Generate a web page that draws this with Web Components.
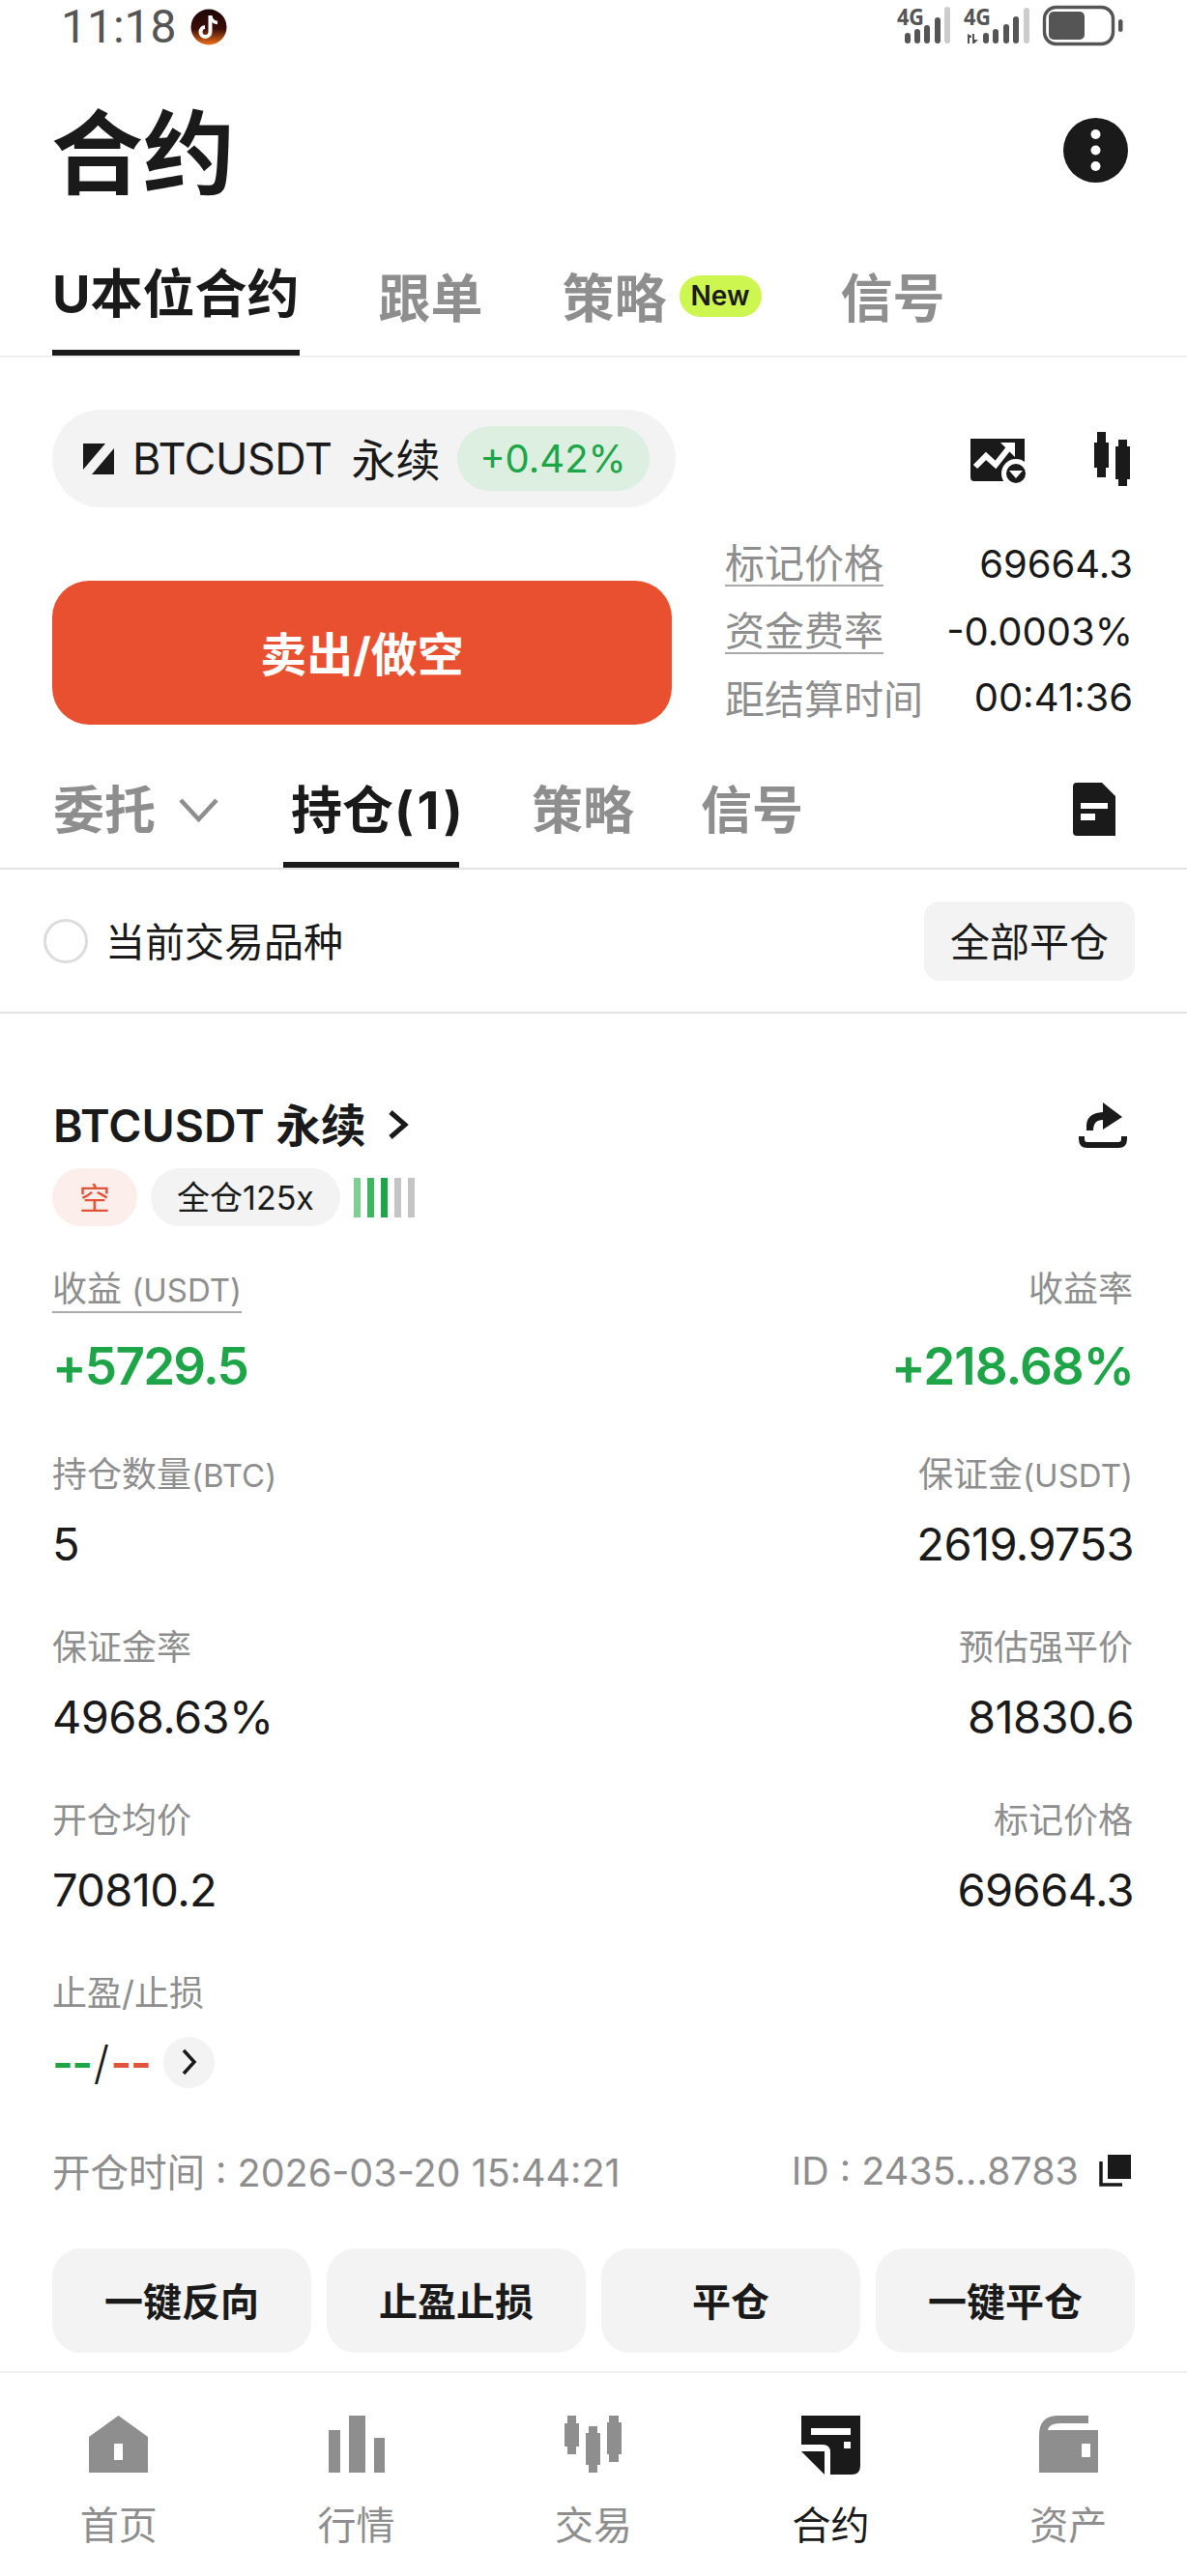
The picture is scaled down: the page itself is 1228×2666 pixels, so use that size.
<!DOCTYPE html>
<html lang="zh">
<head>
<meta charset="utf-8">
<title>合约</title>
<style>
  html, body { margin: 0; padding: 0; background: #fff; }
  body { width: 1228px; height: 2666px; overflow: hidden; color: #1a1a1a;
    font-family: Inter, "Noto Sans CJK SC", sans-serif; }
</style>
</head>
<body>
<status-bar></status-bar>
<page-header>合约</page-header>
<main-tabs></main-tabs>
<ticker-bar></ticker-bar>
<trade-panel></trade-panel>
<order-tabs></order-tabs>
<filter-row></filter-row>
<position-card></position-card>
<bottom-nav>
  <nav-item>
    <svg slot="icon" width="61" height="61" viewBox="0 0 61 61"><path fill="#8e8e8e" fill-rule="evenodd" d="M0 59V22L30.5 0 61 22V59ZM26 29V46H35V29Z"/></svg>
    首页
  </nav-item>
  <nav-item>
    <svg slot="icon" width="61" height="61" viewBox="0 0 61 61"><path fill="#8e8e8e" d="M2 15H14V59H2ZM23 0H40V59H23ZM49 23H60V59H49Z"/></svg>
    行情
  </nav-item>
  <nav-item>
    <svg slot="icon" width="61" height="61" viewBox="0 0 61 61"><path fill="#8e8e8e" d="M4 0H13V8H16V32H13V40H4V32H1V8H4ZM26 11H35V18H38V51H35V59H26V51H23V18H26ZM47 0H57V7H60V40H57V48H47V40H45V7H47Z"/></svg>
    交易
  </nav-item>
  <nav-item active>
    <svg slot="icon" width="61" height="61" viewBox="0 0 61 61"><path fill="#1a1a1a" fill-rule="evenodd" d="M0 0H61V52Q61 61 52 61H30V38Q30 30 22 30H0ZM10 13V20H51V13ZM44 27V34H51V27Z"/><path fill="#1a1a1a" d="M0 37H24V61Z"/></svg>
    合约
  </nav-item>
  <nav-item>
    <svg slot="icon" width="61" height="61" viewBox="0 0 61 61"><path fill="#8e8e8e" fill-rule="evenodd" d="M0 59V20Q0 0 20 0H51V8H22Q10 8 9 15H61V59ZM44 29V43H53V29Z"/></svg>
    资产
  </nav-item>
</bottom-nav>

<script>
class StatusBar extends HTMLElement {
  constructor() {
    super();
    this.attachShadow({ mode: "open" });
  }
  connectedCallback() {
    this.shadowRoot.innerHTML = `
      <style>
        :host { display: flex; align-items: center; height: 56px; padding: 0 63px; }
        .time { font-family: Roboto, sans-serif; font-size: 48px; line-height: 56px; color: #555; width: 134px; }
        .right { margin-left: auto; display: block; }
      </style>
      <span class="time">11:18</span>
      <svg width="38" height="38" viewBox="0 0 38 38">
        <defs><linearGradient id="tk" x1="0" y1="0" x2="0" y2="1">
          <stop offset="0" stop-color="#1d0806"/><stop offset=".55" stop-color="#3a0d08"/><stop offset="1" stop-color="#f0701a"/>
        </linearGradient></defs>
        <circle cx="19" cy="19" r="18.5" fill="url(#tk)"/>
        <path fill="none" stroke="#fff" stroke-width="4" d="M20.5 7V24A5 5 0 1 1 15 19"/>
        <path fill="none" stroke="#fff" stroke-width="3.4" d="M21 8Q22 14 28 14.5"/>
      </svg>
      <svg class="right" width="240" height="56" viewBox="925 0 240 56">
        <text x="928" y="26" font-family="'Open Sans',sans-serif" font-weight="700" font-size="24" textLength="28" lengthAdjust="spacingAndGlyphs" fill="#555">4G</text>
        <g fill="#555">
          <rect x="936" y="34" width="6" height="11" rx="3"/><rect x="946" y="30" width="6" height="15" rx="3"/>
          <rect x="956" y="26" width="6" height="19" rx="3"/><rect x="967" y="18" width="6" height="27" rx="3"/>
        </g>
        <rect x="977" y="7" width="6" height="38" rx="3" fill="#ccc"/>
        <text x="997" y="26" font-family="'Open Sans',sans-serif" font-weight="700" font-size="24" textLength="28" lengthAdjust="spacingAndGlyphs" fill="#555">4G</text>
        <path fill="#555" d="M1001 35V45H1003V39H1005V37ZM1006 35H1008V41H1012L1008 45H1006Z"/>
        <g fill="#555">
          <rect x="1017" y="34" width="6" height="11" rx="3"/><rect x="1027" y="30" width="6" height="15" rx="3"/>
          <rect x="1038" y="25" width="6" height="20" rx="3"/><rect x="1048" y="17" width="6" height="28" rx="3"/>
        </g>
        <rect x="1059" y="8" width="6" height="37" rx="3" fill="#ccc"/>
        <rect x="1080.5" y="7.5" width="71" height="38" rx="12" fill="none" stroke="#555" stroke-width="3.4"/>
        <rect x="1085" y="12" width="37" height="29" rx="5" fill="#555"/>
        <rect x="1157" y="20" width="4.5" height="13" rx="2.2" fill="#555"/>
      </svg>
    `;
  }
}

class PageHeader extends HTMLElement {
  constructor() {
    super();
    this.attachShadow({ mode: "open" });
  }
  connectedCallback() {
    this.shadowRoot.innerHTML = `
      <style>
        :host { display: flex; align-items: center; justify-content: space-between; height: 208px; padding: 0 61px 0 53px; }
        h1 { margin: 0; font-size: 95px; font-weight: 700; line-height: 120px; }
        svg { margin-bottom: 9px; }
      </style>
      <h1><slot></slot></h1>
      <svg width="67" height="67" viewBox="0 0 67 67">
        <circle cx="33.5" cy="33.5" r="33.5" fill="#1a1a1a"/>
        <circle cx="33.5" cy="17" r="5" fill="#fff"/><circle cx="33.5" cy="33.5" r="5" fill="#fff"/><circle cx="33.5" cy="50" r="5" fill="#fff"/>
      </svg>
    `;
  }
}

class MainTabs extends HTMLElement {
  constructor() {
    super();
    this.attachShadow({ mode: "open" });
  }
  connectedCallback() {
    this.shadowRoot.innerHTML = `
      <style>
        :host { display: flex; gap: 82px; height: 104px; padding: 0 54px; border-bottom: 2px solid #efefef;
          font-size: 54px; font-weight: 700; color: #8e8e8e; }
        .tab { display: flex; align-items: center; height: 82px; white-space: nowrap; }
        .on { color: #1a1a1a; height: 98px; border-bottom: 6px solid #1a1a1a; align-items: flex-start; line-height: 82px; }
        .new { display: inline-block; width: 85px; height: 43px; margin-left: 13px; margin-top: 2px; border-radius: 22px; background: #cdf651;
          color: #1a1a1a; font-size: 28px; font-weight: 600; line-height: 43px; text-align: center; }
      </style>
      <div class="tab on">U本位合约</div>
      <div class="tab">跟单</div>
      <div class="tab">策略<span class="new">New</span></div>
      <div class="tab">信号</div>
    `;
  }
}

class TickerBar extends HTMLElement {
  constructor() {
    super();
    this.attachShadow({ mode: "open" });
  }
  connectedCallback() {
    this.shadowRoot.innerHTML = `
      <style>
        :host { display: flex; align-items: center; margin-top: 54px; padding: 0 59px 0 54px; }
        .pill { display: flex; align-items: center; box-sizing: border-box; width: 645px; height: 101px; padding-left: 32px; border-radius: 51px;
          background: #f3f3f3; font-size: 45px; white-space: nowrap; }
        .sym { margin-left: 19px; letter-spacing: -0.5px; }
        .perp { margin-left: 20px; font-size: 46px; margin-top: -3px; }
        .pct { display: flex; align-items: center; justify-content: center; width: 199px; height: 67px; margin-left: 17px; box-sizing: border-box; border-radius: 34px;
          background: #dcefe1; color: #1da548; font-size: 40px; }
        .icons { margin-left: auto; display: flex; align-items: center; gap: 66px; }
        .chart { margin-top: 10px; }
      </style>
      <div class="pill">
        <svg width="32" height="32" viewBox="0 0 32 32"><path fill="#1a1a1a" d="M0 0H23L0 27ZM32 5V32H9Z"/></svg>
        <span class="sym">BTCUSDT</span><span class="perp">永续</span>
        <span class="pct">+0.42%</span>
      </div>
      <div class="icons">
        <svg class="chart" width="62" height="52" viewBox="0 0 62 52">
          <path fill="#1a1a1a" d="M0 0H56V44H4Q0 44 0 40Z"/>
          <path fill="none" stroke="#fff" stroke-width="6" d="M5 29L16 18 26 27 41 8"/>
          <path fill="#fff" d="M31 4H46V19Z"/>
          <circle cx="47" cy="36" r="15" fill="#fff"/><circle cx="47" cy="36" r="10" fill="#1a1a1a"/>
          <path fill="#fff" d="M40 33H54L47 41Z"/>
        </svg>
        <svg width="37" height="56" viewBox="0 0 37 56">
          <path fill="#1a1a1a" d="M3 0H12V11H15V37H12V47H3V37H0V11H3ZM25 8H34V15H37V49H34V56H25V49H22V15H25Z"/>
        </svg>
      </div>
    `;
  }
}

class TradePanel extends HTMLElement {
  constructor() {
    super();
    this.attachShadow({ mode: "open" });
  }
  connectedCallback() {
    this.shadowRoot.innerHTML = `
      <style>
        :host { display: grid; grid-template-columns: 641px 422px; column-gap: 55px; padding: 23px 0 0 54px; align-items: start; }
        button { margin-top: 53px; height: 149px; padding: 0 0 4px; border: 0; border-radius: 38px; background: #e95030; color: #fff;
          font: 700 48px Inter, "Noto Sans CJK SC", sans-serif; }
        .row { display: flex; align-items: center; justify-content: space-between; height: 70px; font-size: 40px; white-space: nowrap; }
        .row span:first-child { color: #8e8e8e; font-size: 41px; }
        .row.last { margin: -2px 0 2px; }
        .dot { line-height: 44px; border-bottom: 2px solid #aaa; margin-top: 2px; }
      </style>
      <button>卖出/做空</button>
      <div>
        <div class="row"><span class="dot">标记价格</span><span>69664.3</span></div>
        <div class="row"><span class="dot">资金费率</span><span>-0.0003%</span></div>
        <div class="row last"><span>距结算时间</span><span>00:41:36</span></div>
      </div>
    `;
  }
}

class OrderTabs extends HTMLElement {
  constructor() {
    super();
    this.attachShadow({ mode: "open" });
  }
  connectedCallback() {
    this.shadowRoot.innerHTML = `
      <style>
        :host { display: flex; height: 140px; border-bottom: 2px solid #e2e2e2; padding-left: 55px; position: relative;
          font-size: 53px; font-weight: 700; color: #8e8e8e; white-space: nowrap; }
        .tab { box-sizing: border-box; height: 140px; padding-top: 41px; line-height: 80px; display: flex; align-items: flex-start; }
        .on { width: 182px; padding-left: 8px; margin-left: 67px; color: #1a1a1a; border-bottom: 6px solid #1a1a1a; }
        .on b { font-weight: 700; letter-spacing: 3.5px; margin-left: 1px; }
        .chev { margin: 26px 0 0 24px; }
        .doc { position: absolute; right: 74px; top: 52px; }
      </style>
      <div class="tab">委托<svg class="chev" width="41" height="26" viewBox="0 0 41 26"><path fill="none" stroke="#8e8e8e" stroke-width="4.5" d="M2 3L20.5 23 39 3"/></svg></div>
      <div class="tab on">持仓<b>(1)</b></div>
      <div class="tab" style="margin-left:75px">策略</div>
      <div class="tab" style="margin-left:69px">信号</div>
      <svg class="doc" width="44" height="55" viewBox="0 0 44 55">
        <path fill="#1a1a1a" fill-rule="evenodd" d="M0 4Q0 0 4 0H30L44 14V55H4Q0 55 0 51ZM8 21V27H36V21ZM8 32V39H23V32Z"/>
      </svg>
    `;
  }
}

class FilterRow extends HTMLElement {
  constructor() {
    super();
    this.attachShadow({ mode: "open" });
  }
  connectedCallback() {
    this.shadowRoot.innerHTML = `
      <style>
        :host { display: flex; align-items: center; height: 147px; padding: 0 54px 0 45px; border-bottom: 2px solid #e2e2e2; font-size: 41px; }
        .check { box-sizing: border-box; width: 46px; height: 46px; border: 3px solid #dcdcdc; border-radius: 50%; margin-right: 18px; }
        .txt { padding-bottom: 3px; }
        .all { margin-left: auto; display: flex; align-items: center; justify-content: center; box-sizing: border-box; width: 218px; height: 82px; padding-bottom: 3px; border-radius: 16px; background: #f3f3f3; }
      </style>
      <span class="check"></span>
      <span class="txt">当前交易品种</span>
      <span class="all">全部平仓</span>
    `;
  }
}

class StatCell extends HTMLElement {
  constructor() {
    super();
    this.attachShadow({ mode: "open" });
  }
  connectedCallback() {
    this.shadowRoot.innerHTML = `
      <style>
        :host { display: flex; flex-direction: column; align-items: flex-start; gap: 11px; white-space: nowrap; }
        :host([right]) { align-items: flex-end; }
        :host([big]) { gap: 20px; margin-bottom: 4px; }
        .label { height: 50px; line-height: 50px; font-size: 36px; color: #8e8e8e; }
        :host([right]) .label { margin-right: 1px; }
        :host([under]) .label { box-sizing: border-box; border-bottom: 2px solid #aaa; }
        .value { display: flex; align-items: center; height: 70px; font-size: 47px; letter-spacing: -0.6px; }
        :host([big]) .value { font-size: 53px; font-weight: 600; color: #1da548; letter-spacing: -1px; }
        :host([under]) .value { letter-spacing: -1.8px; }
      </style>
      <span class="label"><slot name="label"></slot></span>
      <span class="value"><slot></slot></span>
    `;
  }
}

class PositionCard extends HTMLElement {
  constructor() {
    super();
    this.attachShadow({ mode: "open" });
  }
  connectedCallback() {
    this.shadowRoot.innerHTML = `
      <style>
        :host { display: block; padding: 82px 55px 19px 54px; }
        .head { display: flex; align-items: center; height: 60px; font-size: 46.5px; font-weight: 600; white-space: nowrap; }
        .head .name { margin-left: 1px; }
        .head .go { margin: 6px 0 0 22px; }
        .head .share { margin: 6px 7px 0 auto; }
        .tags { display: flex; align-items: center; height: 60px; margin-top: 18px; font-size: 34px; }
        .tag { display: flex; align-items: center; justify-content: center; box-sizing: border-box; height: 60px; padding-bottom: 3px; border-radius: 30px; }
        .short { width: 88px; background: #fceeeb; color: #e0553a; font-size: 32px; }
        .lev { width: 196px; margin-left: 14px; background: #f3f3f3; }
        .bars { display: flex; gap: 7px; margin-left: 14px; }
        .bars i { width: 7px; height: 41px; background: #c4c4c4; }
        .stats { display: grid; grid-template-columns: 1fr 1fr; row-gap: 48px; margin-top: 40px; }
        .tp { display: inline-flex; align-items: center; }
        .green, .red { font-weight: 600; letter-spacing: -1.5px; }
        .green { color: #1da548; } .red { color: #e0553a; }
        .tp .sl { font-weight: 300; font-size: 47px; margin: 0 2px; }
        .tp .more { display: flex; align-items: center; justify-content: center; width: 53px; height: 53px; border-radius: 50%; background: #f3f3f3; margin-left: 14px; }
        .time { display: flex; justify-content: space-between; align-items: center; height: 50px; margin-top: 51px; font-size: 39.5px; color: #8e8e8e; white-space: nowrap; }
        .id { display: flex; align-items: center; gap: 21px; margin: 3px 3px 0 0; }
        .actions { display: grid; grid-template-columns: repeat(4, 268px); column-gap: 16px; margin-top: 57px; }
        .actions div { display: flex; align-items: center; justify-content: center; box-sizing: border-box; height: 108px; padding-bottom: 2px; border-radius: 30px; background: #f3f3f3; font-size: 40px; font-weight: 700; }
      </style>
      <div class="head">
        <span class="name">BTCUSDT 永续</span>
        <svg class="go" width="22" height="30" viewBox="0 0 22 30"><path fill="none" stroke="#1a1a1a" stroke-width="5" d="M3 2L18 15 3 28"/></svg>
        <svg class="share" width="50" height="47" viewBox="0 0 50 47">
          <path fill="#1a1a1a" d="M8 29V24Q8 11 25 10V0L45 15 25 28V18Q15 18 15 29Z"/>
          <path fill="none" stroke="#1a1a1a" stroke-width="6" d="M3 35V38Q3 44 9 44H41Q47 44 47 38V35"/>
        </svg>
      </div>
      <div class="tags">
        <span class="tag short">空</span>
        <span class="tag lev">全仓125x</span>
        <span class="bars"><i style="background:#7fcf92"></i><i style="background:#3fb560"></i><i style="background:#1da548"></i><i></i><i></i></span>
      </div>
      <div class="stats">
        <stat-cell big under><span slot="label">收益 <span style="font-size:33px">(USDT)</span></span>+5729.5</stat-cell>
        <stat-cell big right><span slot="label">收益率</span>+218.68%</stat-cell>
        <stat-cell><span slot="label">持仓数量<span style="font-size:33px">(BTC)</span></span>5</stat-cell>
        <stat-cell right><span slot="label">保证金<span style="font-size:33px">(USDT)</span></span>2619.9753</stat-cell>
        <stat-cell><span slot="label">保证金率</span>4968.63%</stat-cell>
        <stat-cell right><span slot="label">预估强平价</span>81830.6</stat-cell>
        <stat-cell><span slot="label">开仓均价</span>70810.2</stat-cell>
        <stat-cell right><span slot="label">标记价格</span>69664.3</stat-cell>
        <stat-cell>
          <span slot="label">止盈/止损</span>
          <span class="tp"><span class="green">--</span><span class="sl">/</span><span class="red">--</span>
            <span class="more"><svg width="18" height="28" viewBox="0 0 18 28"><path fill="none" stroke="#1a1a1a" stroke-width="3.5" d="M3 2L14 14 3 26"/></svg></span>
          </span>
        </stat-cell>
      </div>
      <div class="time">
        <span>开仓时间 : 2026-03-20 15:44:21</span>
        <span class="id">ID : 2435...8783
          <svg width="33" height="33" viewBox="0 0 33 33"><path fill="#1a1a1a" d="M9 0H33V25H9Z"/><path fill="none" stroke="#1a1a1a" stroke-width="3.5" d="M2 7V31H24"/></svg>
        </span>
      </div>
      <div class="actions">
        <div>一键反向</div><div>止盈止损</div><div>平仓</div><div>一键平仓</div>
      </div>
    `;
  }
}

class BottomNav extends HTMLElement {
  constructor() {
    super();
    this.attachShadow({ mode: "open" });
  }
  connectedCallback() {
    this.shadowRoot.innerHTML = `
      <style>
        :host { display: grid; grid-template-columns: repeat(5, 1fr); border-top: 2px solid #f0f0f0; padding-top: 44px; }
      </style>
      <slot></slot>
    `;
  }
}

class NavItem extends HTMLElement {
  constructor() {
    super();
    this.attachShadow({ mode: "open" });
  }
  connectedCallback() {
    this.shadowRoot.innerHTML = `
      <style>
        :host { display: flex; flex-direction: column; align-items: center; color: #8e8e8e; font-size: 40px; }
        :host([active]) { color: #1a1a1a; }
        .icon { display: block; height: 61px; }
        .label { display: block; margin-top: 28px; line-height: 50px; }
      </style>
      <span class="icon"><slot name="icon"></slot></span>
      <span class="label"><slot></slot></span>
    `;
  }
}

customElements.define("status-bar", StatusBar);
customElements.define("page-header", PageHeader);
customElements.define("main-tabs", MainTabs);
customElements.define("ticker-bar", TickerBar);
customElements.define("trade-panel", TradePanel);
customElements.define("order-tabs", OrderTabs);
customElements.define("filter-row", FilterRow);
customElements.define("stat-cell", StatCell);
customElements.define("position-card", PositionCard);
customElements.define("bottom-nav", BottomNav);
customElements.define("nav-item", NavItem);
</script>
</body>
</html>
